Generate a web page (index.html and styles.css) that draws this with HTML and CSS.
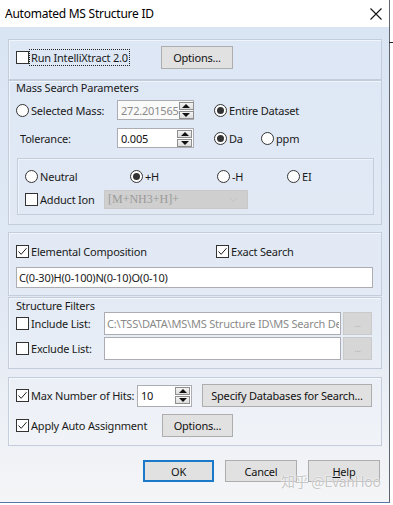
FILE: index.html
```html
<!DOCTYPE html>
<html>
<head>
<meta charset="utf-8">
<link rel="stylesheet" href="styles.css">
</head>
<body>
<div class="window">
  <div class="titlebar">
    <span class="title">Automated MS Structure ID</span>
    <svg class="close" width="12" height="12" viewBox="0 0 12 12"><path d="M0.5 0.5 L11.5 11.5 M11.5 0.5 L0.5 11.5" stroke="#111" stroke-width="1.1" fill="none"/></svg>
  </div>
  <div class="client">
    <div class="group g1">
      <div class="item w145"><span class="cb"></span><span class="lbl focus">Run IntelliXtract 2.0</span></div>
      <div class="btn w72">Options...</div>
    </div>

    <div class="group g2">
      <div class="legend">Mass Search Parameters</div>
      <div class="row r20 mt6">
        <div class="item w101"><span class="rb"></span><span class="lbl">Selected Mass:</span></div>
        <div class="spin disabled"><span class="val">272.201565</span><span class="arrows"><span class="arr up"></span><span class="arr dn"></span></span></div>
        <div class="item ml20"><span class="rb on"></span><span class="lbl">Entire Dataset</span></div>
      </div>
      <div class="row r20 mt8">
        <div class="item w101"><span class="plain">Tolerance:</span></div>
        <div class="spin"><span class="val">0.005</span><span class="arrows"><span class="arr up"></span><span class="arr dn"></span></span></div>
        <div class="item ml20 w47"><span class="rb on"></span><span class="lbl">Da</span></div>
        <div class="item"><span class="rb"></span><span class="lbl">ppm</span></div>
      </div>
      <div class="inner">
        <div class="row r16">
          <div class="item w105"><span class="rb"></span><span class="lbl">Neutral</span></div>
          <div class="item w87"><span class="rb on"></span><span class="lbl">+H</span></div>
          <div class="item w70"><span class="rb"></span><span class="lbl">-H</span></div>
          <div class="item"><span class="rb"></span><span class="lbl">EI</span></div>
        </div>
        <div class="row r19 mt6">
          <div class="item w79"><span class="cb"></span><span class="lbl">Adduct Ion</span></div>
          <div class="combo"><span>[M+NH3+H]+</span><svg width="9" height="5" viewBox="0 0 9 5"><path d="M0.5 0.5 L4.5 4.5 L8.5 0.5" stroke="#c2c2c2" fill="none"/></svg></div>
        </div>
      </div>
    </div>

    <div class="group g3">
      <div class="row r16">
        <div class="item w200"><span class="cb"><svg width="11" height="11" viewBox="0 0 11 11"><path d="M1.5 5.5 L4.2 8.3 L9.5 2.2" stroke="#222" stroke-width="1" fill="none"/></svg></span><span class="lbl">Elemental Composition</span></div>
        <div class="item"><span class="cb"><svg width="11" height="11" viewBox="0 0 11 11"><path d="M1.5 5.5 L4.2 8.3 L9.5 2.2" stroke="#222" stroke-width="1" fill="none"/></svg></span><span class="lbl">Exact Search</span></div>
      </div>
      <div class="field wide mt8">C(0-30)H(0-100)N(0-10)O(0-10)</div>
    </div>

    <div class="group g4">
      <div class="legend">Structure Filters</div>
      <div class="row r23">
        <div class="item w88"><span class="cb"></span><span class="lbl">Include List:</span></div>
        <div class="field path grey"><span class="clip">C:\TSS\DATA\MS\MS Structure ID\MS Search De</span></div>
        <div class="browse">...</div>
      </div>
      <div class="row r23 mt2">
        <div class="item w88"><span class="cb"></span><span class="lbl">Exclude List:</span></div>
        <div class="field path"></div>
        <div class="browse">...</div>
      </div>
    </div>

    <div class="group g5">
      <div class="row r23">
        <div class="item w121"><span class="cb"><svg width="11" height="11" viewBox="0 0 11 11"><path d="M1.5 5.5 L4.2 8.3 L9.5 2.2" stroke="#222" stroke-width="1" fill="none"/></svg></span><span class="lbl">Max Number of Hits:</span></div>
        <div class="spin small"><span class="val">10</span><span class="arrows"><span class="arr up"></span><span class="arr dn"></span></span></div>
        <div class="btn w170 ml10">Specify Databases for Search...</div>
      </div>
      <div class="row r23 mt7">
        <div class="item w146"><span class="cb"><svg width="11" height="11" viewBox="0 0 11 11"><path d="M1.5 5.5 L4.2 8.3 L9.5 2.2" stroke="#222" stroke-width="1" fill="none"/></svg></span><span class="lbl">Apply Auto Assignment</span></div>
        <div class="btn w71">Options...</div>
      </div>
    </div>

    <div class="buttons">
      <div class="btn ok">OK</div>
      <div class="btn w72">Cancel</div>
      <div class="btn w72"><span class="u">H</span>elp</div>
    </div>
    <div class="watermark">知乎 @EvanHoo</div>
  </div>
</div>
<div class="tick"></div>
</body>
</html>
```

FILE: styles.css
```css
* { box-sizing: border-box; }
body {
  margin: 0;
  background: #fff;
  font-family: "Noto Sans", "Noto Sans CJK SC", sans-serif;
  font-size: 11px;
  letter-spacing: -0.2px;
  color: #1a1a1a;
  position: relative;
}
.window {
  position: relative;
  width: 390px;
  height: 503px;
  border-right: 1px solid #5f6670;
  border-bottom: 1px solid #5577aa;
  display: flex;
  flex-direction: column;
}
.titlebar {
  height: 27px;
  flex: none;
  background: #fff;
  display: flex;
  align-items: center;
  justify-content: space-between;
  padding: 0 7px 0 5px;
}
.title { font-size: 12px; letter-spacing: -0.25px; color: #000; }
.close { display: block; }
.client {
  flex: 1;
  position: relative;
  background: linear-gradient(#dae5f4 0%, #e0e8f4 55%, #eef1f6 85%, #f4f5f7 100%);
  padding: 12px 0 0 8px;
  display: flex;
  flex-direction: column;
}
.group {
  width: 374px;
  border: 1px solid #c3cddc;
  box-shadow: inset 1px 1px 0 rgba(255,255,255,0.55);
  background: rgba(255,255,255,0.10);
  padding-left: 7px;
  flex: none;
}
.g1 { height: 41px; display: flex; align-items: center; padding-top: 6px; padding-bottom: 10px; }
.g1 .btn { height: 23px; }
.g2 { height: 145px; padding-top: 0; }
.g3 { height: 64px; margin-top: 7px; padding-top: 10px; }
.g4 { height: 72px; margin-top: 1px; padding-top: 1px; }
.g5 { height: 69px; margin-top: 8px; padding-top: 6px; }

.legend { height: 13px; line-height: 13px; margin-left: 0; }
.row { display: flex; align-items: center; }
.r16 { height: 16px; }
.r19 { height: 19px; }
.r20 { height: 20px; }
.r23 { height: 23px; }
.mt2 { margin-top: 2px; }
.mt6 { margin-top: 6px; }
.mt7 { margin-top: 7px; }
.mt8 { margin-top: 8px; }
.ml10 { margin-left: 10px; }
.ml20 { margin-left: 20px; }

.item { display: flex; align-items: center; flex: none; white-space: nowrap; }
.w47 { width: 47px; }
.w70 { width: 70px; }
.w79 { width: 79px; }
.w87 { width: 87px; }
.w88 { width: 88px; }
.w101 { width: 101px; }
.w105 { width: 105px; }
.w121 { width: 121px; }
.w145 { width: 145px; }
.w146 { width: 146px; }
.w200 { width: 200px; }
.w71 { width: 71px; }
.w72 { width: 72px; }
.w170 { width: 170px; }

.cb {
  width: 13px; height: 13px; flex: none;
  border: 1px solid #333;
  background: #fff;
  display: flex; align-items: center; justify-content: center;
}
.cb svg { display: block; }
.rb {
  width: 13px; height: 13px; flex: none;
  border: 1px solid #333;
  border-radius: 50%;
  background: #fff;
  display: flex; align-items: center; justify-content: center;
}
.rb.on::after {
  content: "";
  width: 7px; height: 7px;
  border-radius: 50%;
  background: #333;
}
.lbl { margin-left: 2px; }
.plain { margin-left: 4px; }
.focus { outline: 1px dotted #222; outline-offset: 0; padding: 0 1px; margin-left: 1px; }

.btn {
  height: 23px;
  background: #e1e1e1;
  border: 1px solid #adadad;
  display: flex; align-items: center; justify-content: center;
  color: #111;
  flex: none;
  white-space: nowrap;
}
.btn .u { text-decoration: underline; }
.ok { width: 71px; border: 2px solid #1a79c9; }

.spin {
  width: 77px; height: 20px;
  border: 1px solid #abadb3;
  background: #fff;
  display: flex; align-items: center;
  flex: none;
}
.spin .val { flex: 1; padding-left: 3px; color: #111; }
.spin.disabled .val { color: #8a8a8a; }
.spin.disabled { background: #fafafa; }
.spin.small { width: 55px; height: 22px; }
.arrows { display: flex; flex-direction: column; gap: 1px; margin-right: 1px; }
.arr {
  width: 15px; height: 8px;
  border: 1px solid #8f8f8f;
  background: linear-gradient(#f4f4f4, #dcdcdc);
  display: flex; align-items: center; justify-content: center;
}
.arr::after { content: ""; width: 0; height: 0; border-left: 4px solid transparent; border-right: 4px solid transparent; }
.arr.up::after { border-bottom: 4px solid #111; }
.arr.dn::after { border-top: 4px solid #111; }

.inner {
  width: 357px; height: 57px;
  margin: 10px 0 0 1px;
  border: 1px solid #c3cddc;
  box-shadow: inset 1px 1px 0 rgba(255,255,255,0.5);
  padding: 9px 7px 0 7px;
}
.combo {
  width: 144px; height: 19px;
  background: #cfcfcf;
  border: 1px solid #c8c8c8;
  display: flex; align-items: center; justify-content: space-between;
  padding: 0 9px 0 3px;
  color: #9a9a9a;
  font-family: "Liberation Serif", serif;
  font-size: 12px;
  letter-spacing: 0;
}
.field {
  height: 21px;
  border: 1px solid #abadb3;
  background: #fff;
  display: flex; align-items: center;
  padding-left: 2px;
  white-space: nowrap;
  overflow: hidden;
  flex: none;
}
.field.wide { width: 357px; margin-left: 0; color: #222; }
.field.path { width: 237px; height: 23px; }
.field.grey { color: #8a8a8a; }
.clip { display: block; overflow: hidden; white-space: nowrap; width: 232px; }
.browse {
  width: 29px; height: 23px;
  margin-left: 2px;
  background: #d6d6d6;
  border: 1px solid #cacaca;
  color: #b0b0b0;
  font-size: 9px;
  display: flex; align-items: center; justify-content: center;
  flex: none;
}
.buttons {
  display: flex;
  gap: 11px;
  margin: 14px 0 0 135px;
}
.buttons .btn { height: 22px; }
.watermark {
  position: absolute;
  left: 281px;
  top: 444px;
  font-family: "Noto Sans CJK SC", "Noto Sans", sans-serif;
  font-size: 14px;
  letter-spacing: -0.3px;
  color: rgba(150,150,150,0.55);
  text-shadow: 0 0 1px #fff, 0 0 2px #fff;
  white-space: nowrap;
  pointer-events: none;
}
.tick {
  position: absolute;
  left: 389px;
  top: 42px;
  width: 4px;
  height: 1px;
  background: #222;
}
```
